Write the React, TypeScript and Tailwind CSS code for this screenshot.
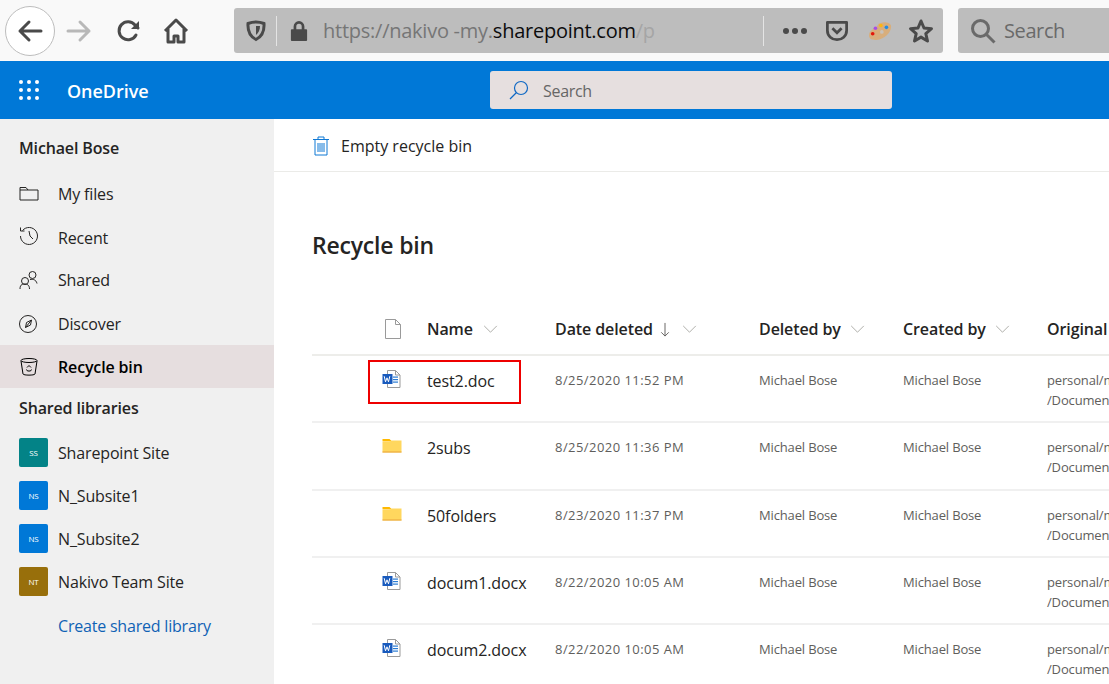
import * as React from "react";

const font = "font-['Open_Sans','Noto_Sans',sans-serif]";

const Glyph = ({ children, className, box = "0 0 24 24" }: { children: React.ReactNode; className?: string; box?: string }) => (
  <svg viewBox={box} fill="none" stroke="currentColor" className={className}>
    {children}
  </svg>
);

const WordIcon = () => (
  <svg viewBox="0 0 20 20" className="w-5 h-5">
    <path d="M5.5 1.5h8l4.5 4.5v12.500h-12.500z" fill="#fff" stroke="#9a9a9a" />
    <path d="M13.500 1.500v4.500h4.500" fill="none" stroke="#9a9a9a" />
    <rect x="11" y="7.500" width="5" height="1.200" fill="#2b7cd3" />
    <rect x="11" y="10" width="5" height="1.200" fill="#2b7cd3" />
    <rect x="11" y="12.500" width="5" height="1.200" fill="#2b7cd3" />
    <rect x="0.500" y="5" width="10" height="10" fill="#185abd" />
    <path d="M2.200 7.200l1.300 5.600 1.500-4 1.500 4 1.300-5.600" fill="none" stroke="#fff" strokeWidth="1" />
  </svg>
);

const FolderIcon = () => (
  <svg viewBox="0 0 20 20" className="w-5 h-5">
    <path d="M0.500 3h7l2.500 2.500h-9.500z" fill="#ffb900" />
    <path d="M0.500 6h6.500l2.500-1.500h10v12h-19z" fill="#ffd75e" />
    <path d="M0.500 16h19" stroke="#e8a33a" strokeWidth="1" />
  </svg>
);

const navItems: { label: string; icon: React.ReactNode; h: string; active?: boolean }[] = [
  {
    label: "My files",
    h: "h-[44px]",
    icon: (
      <Glyph className="w-5 h-5" box="0 0 20 20">
        <path d="M1 16V3.500h6l2 2.500h10v10z" strokeWidth="1" />
        <path d="M1 6h8" strokeWidth="1" />
      </Glyph>
    ),
  },
  {
    label: "Recent",
    h: "h-[43px]",
    icon: (
      <Glyph className="w-5 h-5 -mt-[4px]" box="0 0 20 20">
        <path d="M3.500 4.500A8.500 8.500 0 1 1 1.500 10M1.500 1.500v3.500h4" strokeWidth="1" />
        <path d="M10 5l1 5 3 3" strokeWidth="1" />
      </Glyph>
    ),
  },
  {
    label: "Shared",
    h: "h-[42px]",
    icon: (
      <Glyph className="w-5 h-5" box="0 0 20 20">
        <circle cx="6" cy="11" r="3.500" strokeWidth="1" />
        <circle cx="13.500" cy="5" r="3.500" strokeWidth="1" />
        <path d="M1 19c0-5 3-5 5-5s4.500 1 4.500 5M11 9.500c3-.5 6 0 7 4" strokeWidth="1" />
      </Glyph>
    ),
  },
  {
    label: "Discover",
    h: "h-[44px] pt-[1px]",
    icon: (
      <Glyph className="w-5 h-5" box="0 0 20 20">
        <circle cx="9" cy="10" r="8.500" strokeWidth="1" />
        <path d="M12.500 6l-5 2.500-1 5 5-2.500z" strokeWidth="1" />
        <path d="M12.500 6L6.500 13.500" strokeWidth="1" />
      </Glyph>
    ),
  },
  {
    label: "Recycle bin",
    h: "h-[43px]",
    active: true,
    icon: (
      <Glyph className="w-5 h-5" box="0 0 20 20">
        <ellipse cx="10" cy="3.500" rx="8" ry="2" strokeWidth="1" />
        <path d="M2 4l2 13c.5 1.500 11.500 1.500 12 0l2-13" strokeWidth="1" />
        <path d="M8 10.500l2-2 2 2M7.500 12.500l1 1.500h3l1-1.500" strokeWidth="1" />
      </Glyph>
    ),
  },
];

const sites = [
  { code: "SS", name: "Sharepoint Site", color: "bg-[#038387]" },
  { code: "NS", name: "N_Subsite1", color: "bg-[#0078d7]" },
  { code: "NS", name: "N_Subsite2", color: "bg-[#0078d7]" },
  { code: "NT", name: "Nakivo Team Site", color: "bg-[#986f0b]" },
];

const rows = [
  { name: "test2.doc", date: "8/25/2020 11:52 PM", word: true },
  { name: "2subs", date: "8/25/2020 11:36 PM", word: false },
  { name: "50folders", date: "8/23/2020 11:37 PM", word: false },
  { name: "docum1.docx", date: "8/22/2020 10:05 AM", word: true },
  { name: "docum2.docx", date: "8/22/2020 10:05 AM", word: true },
];

const Chevron = () => (
  <svg viewBox="0 0 16 10" className="w-[15px] h-[9px] text-[#a6a6a0]" fill="none" stroke="currentColor">
    <path d="M1 1l7 7 7-7" strokeWidth="1" />
  </svg>
);

function BrowserBar() {
  return (
    <div className="h-[61px] bg-[#f9f9f9] flex items-center">
      <div className="w-[234px] flex items-center shrink-0 text-[#4a4a4a]">
        <div className="ml-[5px] w-[50px] h-[50px] rounded-full bg-white border border-[#bdbdbd] flex items-center justify-center">
          <Glyph className="w-[26px] h-[26px]" box="0 0 26 26">
            <path d="M24 13H3M12 4l-9 9 9 9" strokeWidth="3" strokeLinecap="round" strokeLinejoin="round" />
          </Glyph>
        </div>
        <Glyph className="w-[26px] h-[26px] ml-[11px] text-[#b8b8b8]" box="0 0 26 26">
          <path d="M2 13h21M14 4l9 9-9 9" strokeWidth="3" strokeLinecap="round" strokeLinejoin="round" />
        </Glyph>
        <Glyph className="w-[26px] h-[26px] ml-[24px]" box="0 0 26 26">
          <path d="M20 17a9 9 0 1 1-1-10l3 3" strokeWidth="3" strokeLinecap="round" />
          <path d="M23 3v8h-8z" fill="currentColor" stroke="none" />
        </Glyph>
        <Glyph className="w-[26px] h-[26px] ml-[21px]" box="0 0 26 26">
          <path d="M2 13L13 2l11 11M5 11v13h6v-6h4v6h6V11" strokeWidth="3" strokeLinejoin="round" />
        </Glyph>
      </div>
      <div className="w-[709px] h-[45px] bg-[#bdbdbd] rounded-[3px] flex items-center text-[#4a4a4a] shrink-0">
        <Glyph className="w-[22px] h-[22px] ml-[11px]" box="0 0 22 22">
          <path d="M3 3.500c5-2 11-2 16 0 .5 8-2 13-8 16-6-3-8.500-8-8-16z" strokeWidth="3" />
          <path d="M11 6h4c0 4-1.500 7-4 9z" fill="currentColor" stroke="none" />
        </Glyph>
        <div className="w-px h-[30px] bg-[#e4e4e4] ml-[9px]" />
        <svg viewBox="0 0 20 24" className="w-[18px] h-[22px] ml-[13px]" fill="#4a4a4a">
          <path d="M4 10V7a6 6 0 0 1 12 0v3h2a1 1 0 0 1 1 1v11a1 1 0 0 1-1 1H2a1 1 0 0 1-1-1V11a1 1 0 0 1 1-1zm3 0h6V7a3 3 0 0 0-6 0z" />
        </svg>
        <div className={`ml-[15px] w-[440px] whitespace-nowrap overflow-hidden text-[20px] text-[#767676] ${font} tracking-[-0.25px]`}>
          https://nakivo -my.<span className="text-[#0c0c0d]">sharepoint.com</span><span className="text-[#a5a5a5]">/p</span>
        </div>
        <div className="w-px h-[30px] bg-[#e4e4e4]" />
        <div className="ml-[19px] flex gap-[3px]">
          <span className="w-[6px] h-[6px] rounded-full bg-[#4a4a4a]" />
          <span className="w-[6px] h-[6px] rounded-full bg-[#4a4a4a]" />
          <span className="w-[6px] h-[6px] rounded-full bg-[#4a4a4a]" />
        </div>
        <Glyph className="w-[24px] h-[22px] ml-[18px]" box="0 0 26 24">
          <path d="M2.500 2.500h21v9c0 6-5 10-10.500 10S2.500 17.500 2.500 11.500z" strokeWidth="3" strokeLinejoin="round" />
          <path d="M8 9l5 5 5-5" strokeWidth="3" />
        </Glyph>
        <svg viewBox="0 0 26 24" className="w-[24px] h-[22px] ml-[19px]">
          <path d="M1 17c0-7 8-7 10-12 2-3 12-4 14 1 1 6-5 13-12 15-3 1-12 2-12-4z" fill="#d8ae7c" />
          <circle cx="5" cy="15" r="2" fill="#e3170a" />
          <circle cx="8" cy="9" r="2" fill="#a64ee6" />
          <circle cx="14" cy="6" r="2" fill="#fbb514" />
          <circle cx="20" cy="8" r="2" fill="#1f8ce8" />
          <circle cx="15" cy="13" r="2" fill="#c9c2ba" />
        </svg>
        <Glyph className="w-[26px] h-[26px] ml-[16px]" box="0 0 26 26">
          <path d="M13 3l3 7 7.500.700-5.700 5 1.700 7.300-6.500-3.900L6.500 23l1.700-7.300-5.700-5L10 10z" strokeWidth="3" strokeLinejoin="round" />
        </Glyph>
      </div>
      <div className="ml-[15px] flex-1 h-[45px] bg-[#bdbdbd] rounded-l-[3px] flex items-center text-[#6a6a6a]">
        <Glyph className="w-[26px] h-[26px] ml-[12px]" box="0 0 26 26">
          <circle cx="10.500" cy="10.500" r="8" strokeWidth="3" />
          <path d="M16.500 16.500l8 8" strokeWidth="3" />
        </Glyph>
        <span className={`ml-[8px] text-[20px] ${font} tracking-[-0.4px]`}>Search</span>
      </div>
    </div>
  );
}

function Header() {
  return (
    <div className="h-[58px] bg-[#0078d7] flex items-center text-white">
      <div className="ml-[19px] w-[20px] grid grid-cols-3 gap-[4px]">
        {Array.from({ length: 9 }).map((_, i) => (
          <span key={i} className="w-[4px] h-[4px] rounded-full bg-white" />
        ))}
      </div>
      <span className={`ml-[28px] w-[423px] text-[18px] font-semibold tracking-[-0.05px] pt-[2px] ${font}`}>OneDrive</span>
      <div className="w-[402px] h-[38px] bg-[#e6dfdf] rounded-[3px] flex items-center text-[#666]">
        <Glyph className="w-[20px] h-[20px] ml-[19px] text-[#0f68c4]" box="0 0 20 20">
          <circle cx="12" cy="8" r="6.500" strokeWidth="1.200" />
          <path d="M7.500 12.500L1 19" strokeWidth="1.200" />
        </Glyph>
        <span className={`ml-[14px] pt-[1px] text-[16px] tracking-[-0.3px] ${font}`}>Search</span>
      </div>
    </div>
  );
}

function Sidebar() {
  return (
    <div className={`w-[274px] shrink-0 bg-[#f0f0f0] text-[#252423] text-[16px] tracking-[-0.15px] ${font}`}>
      <div className="h-[53px] pl-[19px] pt-[18px] font-semibold leading-[22px]">Michael Bose</div>
      {navItems.map((n) => (
        <div
          key={n.label}
          className={`${n.h} pl-[19px] flex items-center ${n.active ? "bg-[#e6dedf] font-semibold text-black" : ""}`}
        >
          <span className="w-[39px]">{n.icon}</span>
          {n.label}
        </div>
      ))}
      <div className="h-[40px] pl-[19px] flex items-center font-semibold">Shared libraries</div>
      <div className="h-[3px]" />
      {sites.map((s) => (
        <div key={s.name} className="h-[43px] pl-[19px] flex items-center">
          <span
            className={`w-[29px] h-[29px] mr-[10px] rounded-[2px] ${s.color} text-white text-[8px] flex items-center justify-center`}
          >
            {s.code}
          </span>
          {s.name}
        </div>
      ))}
      <div className="h-[46px] pl-[58px] flex items-center text-[#0f62b5] tracking-[-0.2px]">Create shared library</div>
    </div>
  );
}

const colHead = "text-[16px] font-semibold text-[#252423] flex items-center tracking-[-0.1px] whitespace-nowrap";
const cols = "grid grid-cols-[70px_45px_128px_204px_144px_144px_120px]";

function Content() {
  return (
    <div className={`relative flex-1 min-w-0 overflow-hidden bg-white ${font}`}>
      <div className="h-[53px] border-b border-[#ebebe8] pl-[39px] flex items-center text-[16px] text-[#252423] pt-[1px]">
        <Glyph className="w-[16px] h-[20px] mr-[12px] text-[#0f78d4]" box="0 0 16 20">
          <path d="M2 4v15h12V4M0 3.500h16M5 3V1h6v2M5 7v9M7 7v9M9 7v9M11 7v9" strokeWidth="1" />
        </Glyph>
        Empty recycle bin
      </div>
      <div className="pl-[38px] pt-[57px] h-[128px] text-[23px] font-semibold text-[#252423] leading-[32px] tracking-[-0.2px]">
        Recycle bin
      </div>
      <div className="ml-[38px] w-[1000px]">
        <div className={`${cols} h-[56px] items-center border-b-2 border-[#ededea] pt-[4px]`}>
          <Glyph className="w-[18px] h-[20px] justify-self-end mr-[-20px] text-[#9a9a9a]" box="0 0 18 20">
            <path d="M1.500 .500h10l5 5v14h-15zM11.500 .500v5h5" strokeWidth="1" />
          </Glyph>
          <div className={`${colHead} col-start-3 gap-[10px]`}>
            Name <Chevron />
          </div>
          <div className={`${colHead} gap-[7px]`}>
            Date deleted
            <svg viewBox="0 0 10 16" className="w-[10px] h-[15px] text-[#605e5c]" fill="none" stroke="currentColor">
              <path d="M5 1v14M1 11l4 4 4-4" strokeWidth="1" />
            </svg>
            <span className="ml-[5px]">
              <Chevron />
            </span>
          </div>
          <div className={`${colHead} gap-[9px]`}>
            Deleted by <Chevron />
          </div>
          <div className={`${colHead} gap-[9px]`}>
            Created by <Chevron />
          </div>
          <div className={colHead}>Original path</div>
        </div>
        {rows.map((r) => (
          <div key={r.name} className={`${cols} h-[67.300px] border-b-2 border-[#f0f0f0] pt-[14px]`}>
            <span className="col-start-1 justify-self-end mr-[-20px] -mt-[1px]">{r.word ? <WordIcon /> : <FolderIcon />}</span>
            <span className="col-start-3 text-[16px] text-[#252423] tracking-[-0.1px] leading-[24px] -mt-[1px]">{r.name}</span>
            <span className="text-[13px] text-[#605e5c] tracking-[0.45px] leading-[20px] whitespace-nowrap">{r.date}</span>
            <span className="text-[13px] text-[#605e5c] tracking-[-0.15px] leading-[20px]">Michael Bose</span>
            <span className="text-[13px] text-[#605e5c] tracking-[-0.15px] leading-[20px]">Michael Bose</span>
            <span className="text-[13px] text-[#605e5c] tracking-[-0.15px] leading-[20px] whitespace-nowrap">
              personal/michael
              <br />
              /Documents
            </span>
          </div>
        ))}
      </div>
      {/* red annotation over the first row */}
      <div className="absolute left-[94px] top-[241px] w-[153px] h-[44px] border-2 border-[#ee0000]" />
    </div>
  );
}

export default function App() {
  return (
    <div className="w-[1109px] h-[684px] overflow-hidden bg-white">
      <BrowserBar />
      <Header />
      <div className="flex h-[565px]">
        <Sidebar />
        <Content />
      </div>
    </div>
  );
}
